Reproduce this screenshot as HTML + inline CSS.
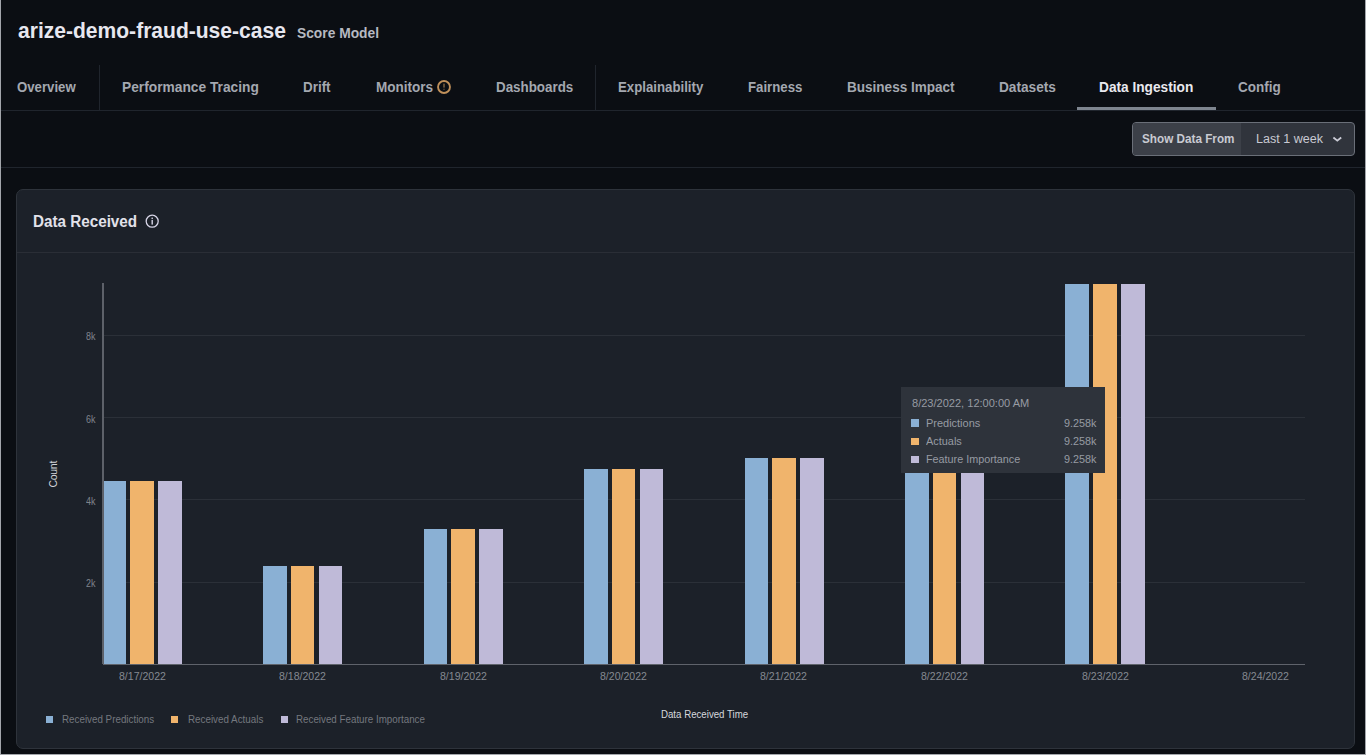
<!DOCTYPE html>
<html>
<head>
<meta charset="utf-8">
<style>
*{margin:0;padding:0;box-sizing:border-box;}
html,body{width:1366px;height:755px;overflow:hidden;background:#0b0e13;}
body{position:relative;font-family:"Liberation Sans",sans-serif;}
.a{position:absolute;white-space:nowrap;line-height:1;}
.frameL{position:absolute;left:0;top:0;width:1px;height:755px;background:#a3a6ab;}
.frameR{position:absolute;left:1365px;top:0;width:1px;height:755px;background:#a3a6ab;}
.frameB{position:absolute;left:0;top:754px;width:1366px;height:1px;background:#a3a6ab;}
.hline{position:absolute;left:0;width:1366px;height:1px;background:#20252d;}
.vsep{position:absolute;top:65px;width:1px;height:45px;background:#20252d;}
.card{position:absolute;left:16px;top:189px;width:1339px;height:560px;background:#1c2129;border:1px solid #2e333b;border-radius:7px;}
.grid{position:absolute;left:103px;width:1202px;height:1px;background:#2b3038;}
.bar{position:absolute;width:23.5px;}
.b1{background:#8ab0d4;}
.b2{background:#f0b46c;}
.b3{background:#bfbad8;}
.sq{position:absolute;width:7.4px;height:7.4px;}
.lsq{position:absolute;width:7.2px;height:7.2px;}
.tt{position:absolute;left:900.5px;top:387px;width:204.5px;height:86px;background:#2e333b;}
</style>
</head>
<body>

<div class="a" style="left:17.80px;top:20.10px;font-size:22.5px;color:#e7e7ef;font-weight:bold;transform:scaleX(0.9355);transform-origin:0 0;">arize-demo-fraud-use-case</div>
<div class="a" style="left:296.80px;top:24.60px;font-size:15px;color:#b6b9c1;font-weight:bold;transform:scaleX(0.9191);transform-origin:0 0;">Score Model</div>

<div class="a" style="left:17.00px;top:80.20px;font-size:14px;color:#a4a8b0;font-weight:bold;transform:scaleX(0.9422);transform-origin:0 0;">Overview</div>
<div class="vsep" style="left:99px;"></div>
<div class="a" style="left:122.00px;top:80.20px;font-size:14px;color:#a4a8b0;font-weight:bold;transform:scaleX(0.9828);transform-origin:0 0;">Performance Tracing</div>
<div class="a" style="left:303.00px;top:80.20px;font-size:14px;color:#a4a8b0;font-weight:bold;transform:scaleX(0.9591);transform-origin:0 0;">Drift</div>
<div class="a" style="left:375.50px;top:80.20px;font-size:14px;color:#a4a8b0;font-weight:bold;transform:scaleX(0.9662);transform-origin:0 0;">Monitors</div>
<svg class="a" style="left:435.9px;top:78.6px;" width="16" height="16" viewBox="0 0 16 16"><circle cx="8" cy="8" r="5.95" fill="none" stroke="#c0905a" stroke-width="1.9"/><rect x="7.4" y="4.6" width="1.2" height="4" fill="#c0905a" opacity="0.8"/><rect x="7.4" y="9.6" width="1.2" height="1.4" fill="#c0905a" opacity="0.5"/></svg>
<div class="a" style="left:495.50px;top:80.20px;font-size:14px;color:#a4a8b0;font-weight:bold;transform:scaleX(0.9550);transform-origin:0 0;">Dashboards</div>
<div class="vsep" style="left:595px;"></div>
<div class="a" style="left:618.00px;top:80.20px;font-size:14px;color:#a4a8b0;font-weight:bold;transform:scaleX(0.9445);transform-origin:0 0;">Explainability</div>
<div class="a" style="left:747.50px;top:80.20px;font-size:14px;color:#a4a8b0;font-weight:bold;transform:scaleX(0.9440);transform-origin:0 0;">Fairness</div>
<div class="a" style="left:847.00px;top:80.20px;font-size:14px;color:#a4a8b0;font-weight:bold;transform:scaleX(0.9674);transform-origin:0 0;">Business Impact</div>
<div class="a" style="left:998.50px;top:80.20px;font-size:14px;color:#a4a8b0;font-weight:bold;transform:scaleX(0.9759);transform-origin:0 0;">Datasets</div>
<div class="a" style="left:1099.00px;top:80.20px;font-size:14px;color:#e9e9ef;font-weight:bold;transform:scaleX(0.9771);transform-origin:0 0;">Data Ingestion</div>
<div class="a" style="left:1238.00px;top:80.20px;font-size:14px;color:#a4a8b0;font-weight:bold;transform:scaleX(0.9638);transform-origin:0 0;">Config</div>
<div class="hline" style="top:110px;"></div>
<div class="a" style="left:1077px;top:107px;width:139px;height:3px;background:#7e858f;"></div>

<div class="a" style="left:1132px;top:122px;width:223px;height:34px;border:1px solid #6a6f78;border-radius:4px;background:#30343c;overflow:hidden;">
  <div class="a" style="left:0;top:0;width:108px;height:32px;background:#3c4048;"></div>
</div>
<div class="a" style="left:1141.50px;top:132.50px;font-size:12.5px;color:#c9cad2;font-weight:bold;transform:scaleX(0.9379);transform-origin:0 0;">Show Data From</div>
<div class="a" style="left:1256.00px;top:132.50px;font-size:12.5px;color:#c9cad2;transform:scaleX(1.0031);transform-origin:0 0;">Last 1 week</div>
<svg class="a" style="left:1332px;top:135px;" width="11" height="8" viewBox="0 0 11 8"><path d="M1.4 2.5 L5.3 5.7 L9.2 2.5" fill="none" stroke="#cbccd6" stroke-width="1.8"/></svg>
<div class="hline" style="top:167px;"></div>

<div class="card"></div>
<div class="a" style="left:32.50px;top:214.30px;font-size:16px;color:#e2e2ea;font-weight:bold;transform:scaleX(0.9516);transform-origin:0 0;">Data Received</div>
<svg class="a" style="left:145px;top:214px;" width="15" height="15" viewBox="0 0 15 15"><circle cx="7.2" cy="7.2" r="6" fill="none" stroke="#d6d4e6" stroke-width="1.3"/><rect x="6.5" y="6" width="1.4" height="4.6" fill="#d6d4e6"/><rect x="6.5" y="3.6" width="1.4" height="1.5" fill="#d6d4e6"/></svg>
<div class="a" style="left:17px;top:252px;width:1337px;height:1px;background:#2a2e36;"></div>

<div class="grid" style="top:335px;"></div>
<div class="grid" style="top:417px;"></div>
<div class="grid" style="top:499px;"></div>
<div class="grid" style="top:582px;"></div>
<div class="a" style="left:86.00px;top:332.00px;font-size:10px;color:#80848c;transform:scaleX(0.8942);transform-origin:0 0;">8k</div>
<div class="a" style="left:86.00px;top:414.50px;font-size:10px;color:#80848c;transform:scaleX(0.8942);transform-origin:0 0;">6k</div>
<div class="a" style="left:86.00px;top:497.00px;font-size:10px;color:#80848c;transform:scaleX(0.8942);transform-origin:0 0;">4k</div>
<div class="a" style="left:86.00px;top:578.50px;font-size:10px;color:#80848c;transform:scaleX(0.8942);transform-origin:0 0;">2k</div>
<div class="a" style="left:33px;top:468.5px;font-size:10.5px;color:#d2d4da;transform:rotate(-90deg);transform-origin:center;width:40px;text-align:center;letter-spacing:-0.3px;">Count</div>

<div class="bar b1" style="left:102.7px;top:481.3px;height:182.7px;"></div>
<div class="bar b2" style="left:130.4px;top:481.3px;height:182.7px;"></div>
<div class="bar b3" style="left:158.3px;top:481.3px;height:182.7px;"></div>
<div class="bar b1" style="left:263.1px;top:565.6px;height:98.4px;"></div>
<div class="bar b2" style="left:290.8px;top:565.6px;height:98.4px;"></div>
<div class="bar b3" style="left:318.8px;top:565.6px;height:98.4px;"></div>
<div class="bar b1" style="left:423.6px;top:528.9px;height:135.1px;"></div>
<div class="bar b2" style="left:451.3px;top:528.9px;height:135.1px;"></div>
<div class="bar b3" style="left:479.2px;top:528.9px;height:135.1px;"></div>
<div class="bar b1" style="left:584.0px;top:468.7px;height:195.3px;"></div>
<div class="bar b2" style="left:611.8px;top:468.7px;height:195.3px;"></div>
<div class="bar b3" style="left:639.6px;top:468.7px;height:195.3px;"></div>
<div class="bar b1" style="left:744.5px;top:458.2px;height:205.8px;"></div>
<div class="bar b2" style="left:772.2px;top:458.2px;height:205.8px;"></div>
<div class="bar b3" style="left:800.1px;top:458.2px;height:205.8px;"></div>
<div class="bar b1" style="left:905.0px;top:440.0px;height:224.0px;"></div>
<div class="bar b2" style="left:932.7px;top:440.0px;height:224.0px;"></div>
<div class="bar b3" style="left:960.6px;top:440.0px;height:224.0px;"></div>
<div class="bar b1" style="left:1065.4px;top:283.5px;height:380.5px;"></div>
<div class="bar b2" style="left:1093.1px;top:283.5px;height:380.5px;"></div>
<div class="bar b3" style="left:1121.0px;top:283.5px;height:380.5px;"></div>
<div class="a" style="left:102px;top:283px;width:1.5px;height:381px;background:#5d6169;"></div>
<div class="a" style="left:103px;top:664px;width:1202px;height:1px;background:#5f636b;"></div>

<div class="a" style="left:119.00px;top:670.90px;font-size:10.5px;color:#858991;transform:scaleX(1.0045);transform-origin:0 0;">8/17/2022</div>
<div class="a" style="left:279.25px;top:670.90px;font-size:10.5px;color:#858991;transform:scaleX(1.0045);transform-origin:0 0;">8/18/2022</div>
<div class="a" style="left:439.50px;top:670.90px;font-size:10.5px;color:#858991;transform:scaleX(1.0045);transform-origin:0 0;">8/19/2022</div>
<div class="a" style="left:599.75px;top:670.90px;font-size:10.5px;color:#858991;transform:scaleX(1.0045);transform-origin:0 0;">8/20/2022</div>
<div class="a" style="left:760.00px;top:670.90px;font-size:10.5px;color:#858991;transform:scaleX(1.0045);transform-origin:0 0;">8/21/2022</div>
<div class="a" style="left:921.25px;top:670.90px;font-size:10.5px;color:#858991;transform:scaleX(1.0045);transform-origin:0 0;">8/22/2022</div>
<div class="a" style="left:1081.50px;top:670.90px;font-size:10.5px;color:#858991;transform:scaleX(1.0045);transform-origin:0 0;">8/23/2022</div>
<div class="a" style="left:1241.75px;top:670.90px;font-size:10.5px;color:#858991;transform:scaleX(1.0045);transform-origin:0 0;">8/24/2022</div>
<div class="a" style="left:660.80px;top:709.00px;font-size:11px;color:#d6d8dd;transform:scaleX(0.8800);transform-origin:0 0;">Data Received Time</div>

<div class="lsq b1" style="left:46px;top:715.5px;"></div>
<div class="a" style="left:61.50px;top:715.00px;font-size:10px;color:#74787f;transform:scaleX(0.9809);transform-origin:0 0;">Received Predictions</div>
<div class="lsq b2" style="left:171.3px;top:715.5px;"></div>
<div class="a" style="left:187.50px;top:715.00px;font-size:10px;color:#74787f;transform:scaleX(0.9819);transform-origin:0 0;">Received Actuals</div>
<div class="lsq b3" style="left:280.6px;top:715.5px;"></div>
<div class="a" style="left:296.00px;top:715.00px;font-size:10px;color:#74787f;transform:scaleX(0.9787);transform-origin:0 0;">Received Feature Importance</div>

<div class="tt"></div>
<div class="a" style="left:911.50px;top:398.30px;font-size:11px;color:#979ba3;transform:scaleX(1.0035);transform-origin:0 0;">8/23/2022, 12:00:00 AM</div>
<div class="sq b1" style="left:911.3px;top:419.2px;"></div>
<div class="a" style="left:926.00px;top:417.84px;font-size:10.8px;color:#979ba3;transform:scaleX(1.0152);transform-origin:0 0;">Predictions</div>
<div class="a" style="left:1064.00px;top:417.84px;font-size:10.8px;color:#979ba3;transform:scaleX(1.0005);transform-origin:0 0;">9.258k</div>
<div class="sq b2" style="left:911.3px;top:437.6px;"></div>
<div class="a" style="left:926.00px;top:436.04px;font-size:10.8px;color:#979ba3;transform:scaleX(1.0119);transform-origin:0 0;">Actuals</div>
<div class="a" style="left:1064.00px;top:436.04px;font-size:10.8px;color:#979ba3;transform:scaleX(1.0005);transform-origin:0 0;">9.258k</div>
<div class="sq b3" style="left:911.3px;top:455.8px;"></div>
<div class="a" style="left:926.00px;top:454.24px;font-size:10.8px;color:#979ba3;transform:scaleX(1.0001);transform-origin:0 0;">Feature Importance</div>
<div class="a" style="left:1064.00px;top:454.24px;font-size:10.8px;color:#979ba3;transform:scaleX(1.0005);transform-origin:0 0;">9.258k</div>
<div class="frameL"></div>
<div class="frameR"></div>
<div class="frameB"></div>
</body>
</html>
